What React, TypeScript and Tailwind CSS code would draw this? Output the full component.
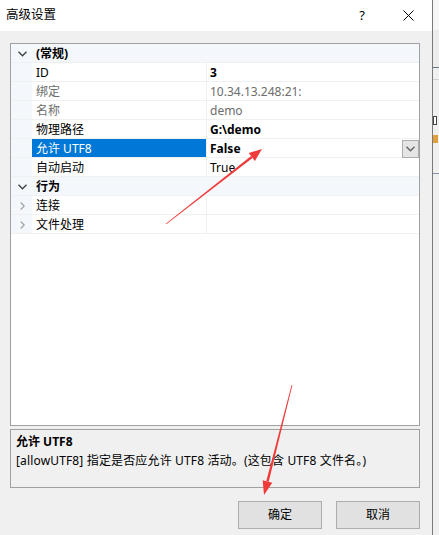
import React from "react"

type Row =
  | { kind: "cat"; label: string }
  | {
      kind: "prop"
      name: string
      value?: string
      bold?: boolean
      muted?: boolean
      selected?: boolean
      collapsed?: boolean
    }

const rows: Row[] = [
  { kind: "cat", label: "(常规)" },
  { kind: "prop", name: "ID", value: "3", bold: true },
  { kind: "prop", name: "绑定", value: "10.34.13.248:21:", muted: true },
  { kind: "prop", name: "名称", value: "demo", muted: true },
  { kind: "prop", name: "物理路径", value: "G:\\demo", bold: true },
  { kind: "prop", name: "允许 UTF8", value: "False", bold: true, selected: true },
  { kind: "prop", name: "自动启动", value: "True" },
  { kind: "cat", label: "行为" },
  { kind: "prop", name: "连接", collapsed: true },
  { kind: "prop", name: "文件处理", collapsed: true },
]

function ChevronDown({ className = "" }: { className?: string }) {
  return (
    <svg width="9" height="6" viewBox="0 0 9 6" className={className}>
      <path d="M0.5 0.8 L4.5 4.8 L8.5 0.8" fill="none" stroke="currentColor" strokeWidth="1.3" />
    </svg>
  )
}

function ChevronRight() {
  return (
    <svg width="5" height="8" viewBox="0 0 5 8" className="text-[#a0a0a0]">
      <path d="M0.7 0.5 L4.2 4 L0.7 7.5" fill="none" stroke="currentColor" strokeWidth="1.2" />
    </svg>
  )
}

function GridRow({ row }: { row: Row }) {
  if (row.kind === "cat") {
    return (
      <div className="flex h-[19px] items-center bg-[#f4f7fc] border-b border-[#eef0f3]">
        <div className="flex w-[21px] justify-center pl-[1px] pt-[1px] text-[#404040]">
          <ChevronDown />
        </div>
        <span className="pl-[4px] pt-[2px] font-bold">{row.label}</span>
      </div>
    )
  }
  return (
    <div className="flex h-[19px] border-b border-[#f0f0f0]">
      <div className="flex w-[21px] shrink-0 items-center justify-center bg-[#f4f7fc] pl-[1px] pt-[1px]">
        {row.collapsed && <ChevronRight />}
      </div>
      <div
        className={`flex w-[174px] shrink-0 items-center pl-[4px] pt-[2px] ${
          row.selected ? "bg-[#0078d7] text-white" : row.muted ? "text-[#6d6d6d]" : ""
        }`}
      >
        {row.name}
      </div>
      <div className="w-px bg-[#f0f0f0]" />
      <div className="relative flex flex-1 items-center pl-[3px] pt-[2px]">
        <span className={`${row.bold ? "font-bold" : ""} ${row.muted ? "text-[#6d6d6d]" : ""}`}>
          {row.value}
        </span>
        {row.selected && (
          <div className="absolute right-0 top-[1px] flex h-[18px] w-[17px] items-center justify-center border border-[#adadad] bg-[#e5e5e5] text-[#606060]">
            <ChevronDown />
          </div>
        )}
      </div>
    </div>
  )
}

// red annotation arrows drawn over the dialog
function Arrows() {
  return (
    <svg className="pointer-events-none absolute inset-0" width="439" height="535" viewBox="0 0 439 535">
      <g fill="#f03a3a">
        <polygon points="166.25,224.3 165.75,223.7 251.1,156.1 252.5,157.9" />
        <polygon points="262,149 254.9,160.9 248.7,153.1" />
        <polygon points="292.4,385.1 291.6,384.9 266.3,481.1 268.7,481.7" />
        <polygon points="264,495 272.3,482.7 262.7,480.2" />
      </g>
    </svg>
  )
}

export default function App() {
  return (
    <div className="relative flex h-[535px] w-[439px] overflow-hidden font-['Noto_Sans','Noto_Sans_CJK_SC',sans-serif] text-[12px] text-black">
      <div className="flex w-[433px] shrink-0 flex-col border-r border-[#7a7a7a] bg-[#f0f0f0]">
        {/* title bar */}
        <div className="flex h-[31px] items-center bg-white pl-[6px]">
          <span className="flex-1 text-[12.5px]">高级设置</span>
          <span className="mr-[38px] text-[13px]">?</span>
          <svg width="11" height="11" viewBox="0 0 11 11" className="mr-[18px]">
            <path d="M0.5 0.5 L10.5 10.5 M10.5 0.5 L0.5 10.5" stroke="#000" strokeWidth="1" />
          </svg>
        </div>

        <div className="flex flex-1 flex-col pl-[10px] pr-[12px] pt-[12px]">
          {/* property grid */}
          <div className="h-[383px] border border-[#a0a0a0] bg-white">
            {rows.map((r, i) => (
              <GridRow key={i} row={r} />
            ))}
          </div>

          {/* description panel */}
          <div className="mt-[3px] h-[59px] border border-[#a0a0a0] px-[5px] pt-[2px]">
            <div className="font-bold leading-[19px]">允许 UTF8</div>
            <div className="leading-[19px] tracking-[0.15px]">
              [allowUTF8] 指定是否应允许 UTF8 活动。(这包含 UTF8 文件名。)
            </div>
          </div>

          <div className="mt-[13px] flex justify-end gap-[14px]">
            <button className="h-[28px] w-[84px] border border-[#adadad] bg-[#e1e1e1]">确定</button>
            <button className="h-[28px] w-[84px] border border-[#adadad] bg-[#e1e1e1]">取消</button>
          </div>
        </div>
      </div>

      {/* sliver of the window behind */}
      <div className="flex flex-1 flex-col bg-[#f0f0f0]">
        <div className="h-[30px] bg-[#f7f7f7]" />
        <div className="h-[38px] border-b border-[#6a7688] bg-[#ececec]" />
        <div className="h-[12px] border-b border-[#d0d0d0]" />
        <div className="mt-[36px] h-[9px] w-[4px] border border-[#444] bg-white" />
        <div className="mt-[10px] h-[8px] w-[5px] bg-[#e0a040]" />
        <div className="mt-[30px] border-b border-[#8a96a8]" />
      </div>

      <Arrows />
    </div>
  )
}
